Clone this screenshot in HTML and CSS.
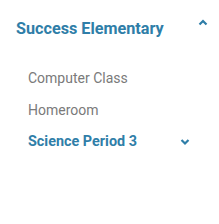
FILE: index.html
```html
<!DOCTYPE html>
<html>
<head>
<meta charset="utf-8">
<link rel="stylesheet" href="styles.css">
</head>
<body>
<div class="panel">
  <div class="header">
    <span class="title">Success Elementary</span>
    <svg class="caret" width="10" height="8" viewBox="0 0 10 8"><path d="M1.5 5.5 L5 2 L8.5 5.5" fill="none" stroke="#2f7ea8" stroke-width="2.2"/></svg>
  </div>
  <ul class="list">
    <li class="item">Computer Class</li>
    <li class="item">Homeroom</li>
    <li class="item active"><span>Science Period 3</span>
      <svg class="chev" width="10" height="8" viewBox="0 0 10 8"><path d="M1.5 2 L5 5.5 L8.5 2" fill="none" stroke="#2f7ea8" stroke-width="2.2"/></svg>
    </li>
  </ul>
</div>
</body>
</html>
```
FILE: styles.css
```css
html, body { margin: 0; padding: 0; background: #fff; }
body { font-family: Roboto, "Liberation Sans", sans-serif; width: 219px; height: 224px; overflow: hidden; }
.panel { padding: 19px 11px 0 16px; }
.header { display: flex; justify-content: space-between; align-items: flex-start; height: 20px; }
.title { font-size: 16.2px; font-weight: 700; color: #2f7ea8; line-height: 20px; }
.caret { margin-top: 0; }
.list { list-style: none; margin: 29px 0 0 0; padding: 0 0 0 12px; }
.item { font-size: 14px; font-weight: 400; color: #7a7a7a; line-height: 20px; height: 32px; display: flex; justify-content: space-between; align-items: flex-start; padding-right: 18px; }
.item.active { color: #2f7ea8; font-weight: 700; font-size: 14.4px; }
.chev { margin-top: 6px; }
```
